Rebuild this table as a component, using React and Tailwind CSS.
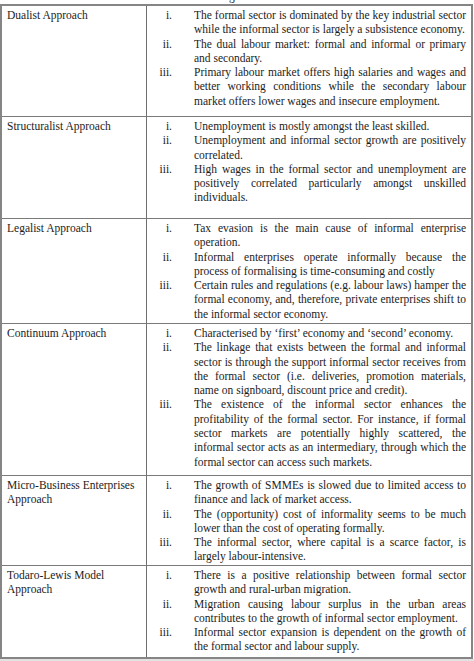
import React from "react";

const rows = [
  {
    title: ["Dualist Approach"],
    h: "h-[111px]",
    items: [
      ["The formal sector is dominated by the key industrial sector", "while the informal sector is largely a subsistence economy."],
      ["The dual labour market: formal and informal or primary", "and secondary."],
      ["Primary labour market offers high salaries and wages and", "better working conditions while the secondary labour", "market offers lower wages and insecure employment."],
    ],
  },
  {
    title: ["Structuralist Approach"],
    h: "h-[102px]",
    items: [
      ["Unemployment is mostly amongst the least skilled."],
      ["Unemployment and informal sector growth are positively", "correlated."],
      ["High wages in the formal sector and unemployment are", "positively correlated particularly amongst unskilled", "individuals."],
    ],
  },
  {
    title: ["Legalist Approach"],
    h: "h-[105px]",
    items: [
      ["Tax evasion is the main cause of informal enterprise", "operation."],
      ["Informal enterprises operate informally because the", "process of formalising is time-consuming and costly"],
      ["Certain rules and regulations (e.g. labour laws) hamper the", "formal economy, and, therefore, private enterprises shift to", "the informal sector economy."],
    ],
  },
  {
    title: ["Continuum Approach"],
    h: "h-[152px]",
    items: [
      ["Characterised by \u2018first\u2019 economy and \u2018second\u2019 economy."],
      ["The linkage that exists between the formal and informal", "sector is through the support informal sector receives from", "the formal sector (i.e. deliveries, promotion materials,", "name on signboard, discount price and credit)."],
      ["The existence of the informal sector enhances the", "profitability of the formal sector. For instance, if formal", "sector markets are potentially highly scattered, the", "informal sector acts as an intermediary, through which the", "formal sector can access such markets."],
    ],
  },
  {
    title: ["Micro-Business Enterprises", "Approach"],
    h: "h-[90px]",
    items: [
      ["The growth of SMMEs is slowed due to limited access to", "finance and lack of market access."],
      ["The (opportunity) cost of informality seems to be much", "lower than the cost of operating formally."],
      ["The informal sector, where capital is a scarce factor, is", "largely labour-intensive."],
    ],
  },
  {
    title: ["Todaro-Lewis Model", "Approach"],
    h: "h-[91px]",
    items: [
      ["There is a positive relationship between formal sector", "growth and rural-urban migration."],
      ["Migration causing labour surplus in the urban areas", "contributes to the growth of informal sector employment."],
      ["Informal sector expansion is dependent on the growth of", "the formal sector and labour supply."],
    ],
  },
];

const numerals = ["i.", "ii.", "iii."];

export default function App() {
  return (
    <div
      className="w-[474px] h-[661px] bg-white text-[#1c1c1c] overflow-hidden"
      style={{ fontFamily: '"Liberation Serif", "Times New Roman", serif' }}
    >
      <div className="h-[4px] overflow-hidden flex">
        <div className="w-[147px]" />
        <div className="pl-[82px] text-[11.5px] leading-none -mt-[9px]">g</div>
      </div>
      <div className="w-[473px] border-2 border-[#858585] border-b-2">
        {rows.map((r, ri) => (
          <div
            key={ri}
            className={`flex ${r.h} ${ri < rows.length - 1 ? "border-b border-[#7a7a7a]" : ""}`}
          >
            <div className="w-[145px] shrink-0 border-r border-[#6e6e6e] pl-[5px] pt-[2px] text-[11.5px] leading-[14.3px]">
              {r.title.map((t, i) => (
                <div key={i}>{t}</div>
              ))}
            </div>
            <div className="flex-1 pt-[2px] text-[11.5px] leading-[14.3px]">
              {r.items.map((lines, ii) => (
                <div key={ii} className="flex">
                  <div className="w-[25px] text-right shrink-0">{numerals[ii]}</div>
                  <div className="ml-[22px] w-[272px]">
                    {lines.map((l, li) => (
                      <div
                        key={li}
                        className={
                          li < lines.length - 1
                            ? "text-justify [text-align-last:justify] whitespace-nowrap"
                            : "whitespace-nowrap"
                        }
                      >
                        {l}
                      </div>
                    ))}
                  </div>
                </div>
              ))}
            </div>
          </div>
        ))}
      </div>
      <div className="h-[3px] bg-[#e2e2e2]" />
    </div>
  );
}
